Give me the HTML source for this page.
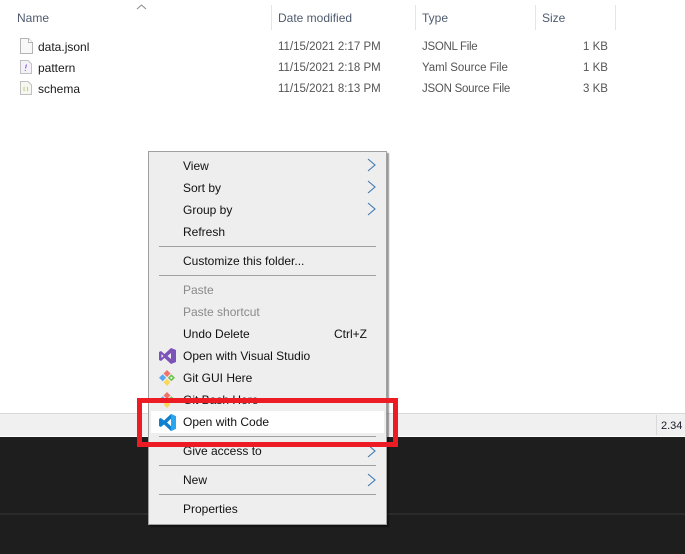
<!DOCTYPE html>
<html><head><meta charset="utf-8"><style>
html,body{margin:0;padding:0;background:#fff}
#p{position:relative;width:685px;height:554px;overflow:hidden;background:#fff;font-family:"Liberation Sans",sans-serif;font-size:12px}
#p div,#p svg{position:absolute}
.t{white-space:nowrap;line-height:16px;height:16px}
.h{color:#4f5b6e}.g{color:#555;font-size:11.5px}.f{color:#1a1a1a}.m{color:#111;left:183px}.d{color:#8a8a8a;left:183px}
.v{width:1px;height:25px;top:5px;background:#e5e5e5}
.s{left:159px;width:217px;height:1px;background:#a0a0a0}
</style></head><body><div id="p">
<svg style="left:136px;top:3px" width="11" height="7"><path d="M1 6L5.500 2L10 6" fill="none" stroke="#8a8a8a" stroke-width="1"/></svg>
<div class="t h" style="left:17px;top:10px">Name</div>
<div class="t h" style="left:278px;top:10px">Date modified</div>
<div class="t h" style="left:422px;top:10px">Type</div>
<div class="t h" style="left:542px;top:10px">Size</div>
<div class="v" style="left:271px"></div><div class="v" style="left:415px"></div><div class="v" style="left:535px"></div><div class="v" style="left:615px"></div>

<svg style="left:20px;top:38px" width="13" height="16"><path d="M.5 .5H8.500L12.500 4.500V15.500H.5Z" fill="#f8f8f8" stroke="#b4b4b4"/><path d="M8.500 .5V4.500H12.500" fill="#fff" stroke="#b4b4b4"/></svg>
<svg style="left:20px;top:60px" width="12" height="14"><path d="M.5 .5H8L11.500 4V13.500H.5Z" fill="#f4f2f8" stroke="#c0c0c0"/><path d="M6.500 4.500L5.500 8.500M5.300 10V11" stroke="#8a62c8" stroke-width="1.100"/></svg>
<svg style="left:20px;top:81px" width="12" height="14"><path d="M.5 .5H8L11.500 4V13.500H.5Z" fill="#f7f7f2" stroke="#c0c0c0"/><path d="M4.500 6L4 6.500V9.500L4.500 10M7 6L7.500 6.500V9.500L7 10" fill="none" stroke="#c2cc78"/></svg>

<div class="t f" style="left:38px;top:39px">data.jsonl</div>
<div class="t f" style="left:38px;top:60px">pattern</div>
<div class="t f" style="left:38px;top:81px">schema</div>
<div class="t g" style="left:278px;top:39px">11/15/2021 2:17 PM</div>
<div class="t g" style="left:278px;top:60px">11/15/2021 2:18 PM</div>
<div class="t g" style="left:278px;top:81px">11/15/2021 8:13 PM</div>
<div class="t g" style="left:422px;top:39px;letter-spacing:-.3px">JSONL File</div>
<div class="t g" style="left:422px;top:60px;letter-spacing:-.05px">Yaml Source File</div>
<div class="t g" style="left:422px;top:81px;letter-spacing:-.25px">JSON Source File</div>
<div class="t g" style="left:583px;top:39px">1 KB</div>
<div class="t g" style="left:583px;top:60px">1 KB</div>
<div class="t g" style="left:583px;top:81px">3 KB</div>

<div style="left:0;top:413px;width:685px;height:1px;background:#d9d9d9"></div>
<div style="left:0;top:414px;width:685px;height:22px;background:#f0f0f0"></div>
<div style="left:656px;top:415px;width:1px;height:20px;background:#d9d9d9"></div>
<div class="t" style="left:661px;top:418px;color:#1a1a2a;font-size:11px">2.34</div>
<div style="left:0;top:437px;width:685px;height:117px;background:#1e1e1e"></div>
<div style="left:0;top:513px;width:685px;height:2px;background:#2b2b2b"></div>

<div style="left:148px;top:151px;width:237px;height:372px;background:#eeeeee;border:1px solid #a0a0a0;box-shadow:2px 2px 1px rgba(0,0,0,.4)"></div>
<div style="left:151px;top:411px;width:233px;height:22px;background:#fff"></div>

<div class="t m" style="top:158px">View</div>
<div class="t m" style="top:180px">Sort by</div>
<div class="t m" style="top:202px">Group by</div>
<div class="t m" style="top:224px">Refresh</div>
<div class="s" style="top:246px"></div>
<div class="t m" style="top:253px">Customize this folder...</div>
<div class="s" style="top:275px"></div>
<div class="t d" style="top:282px">Paste</div>
<div class="t d" style="top:304px">Paste shortcut</div>
<div class="t m" style="top:326px">Undo Delete</div>
<div class="t m" style="left:334px;top:326px">Ctrl+Z</div>
<div class="t m" style="top:348px">Open with Visual Studio</div>
<div class="t m" style="top:370px">Git GUI Here</div>
<div class="t m" style="top:392px">Git Bash Here</div>
<div class="t m" style="top:414px">Open with Code</div>
<div class="s" style="top:436px"></div>
<div class="t m" style="top:443px">Give access to</div>
<div class="s" style="top:465px"></div>
<div class="t m" style="top:472px">New</div>
<div class="s" style="top:494px"></div>
<div class="t m" style="top:501px">Properties</div>

<svg style="left:367px;top:158px" width="10" height="14"><path d="M1 1L8 7L1 13" fill="none" stroke="#3f79b0" stroke-width="1.100"/></svg>
<svg style="left:367px;top:180px" width="10" height="14"><path d="M1 1L8 7L1 13" fill="none" stroke="#3f79b0" stroke-width="1.100"/></svg>
<svg style="left:367px;top:202px" width="10" height="14"><path d="M1 1L8 7L1 13" fill="none" stroke="#3f79b0" stroke-width="1.100"/></svg>
<svg style="left:367px;top:444px" width="10" height="14"><path d="M1 1L8 7L1 13" fill="none" stroke="#3f79b0" stroke-width="1.100"/></svg>
<svg style="left:367px;top:473px" width="10" height="14"><path d="M1 1L8 7L1 13" fill="none" stroke="#3f79b0" stroke-width="1.100"/></svg>

<svg style="left:159px;top:348px" width="17" height="16" viewBox="0 0 17 16"><path d="M12 0L17 2V14L12 16L5.500 10L2 13L0 12V4L2 3L5.500 6ZM12 5L8.500 8L12 11ZM2.500 6V10L4.500 8Z" fill="#7c53b8" fill-rule="evenodd"/></svg>

<svg style="left:159px;top:370px" width="16" height="16" viewBox="0 0 16 16"><path d="M8 0L11.500 3.500L8 7L4.500 3.500Z" fill="#f0736a"/><path d="M3.700 4.300L7.200 7.800L3.700 11.300L0 7.800Z" fill="#5aa7f0"/><path d="M12.300 4.300L16 7.800L12.300 11.300L8.800 7.800Z" fill="#6cc24a"/><path d="M12.300 6.500L13.600 7.800L12.300 9.100L11 7.800Z" fill="#fff"/><path d="M8 8.800L11.500 12.300L8 16L4.500 12.300Z" fill="#fbd75b"/></svg>
<svg style="left:159px;top:392px" width="16" height="16" viewBox="0 0 16 16"><path d="M8 0L11.500 3.500L8 7L4.500 3.500Z" fill="#f0736a"/><path d="M3.700 4.300L7.200 7.800L3.700 11.300L0 7.800Z" fill="#5aa7f0"/><path d="M12.300 4.300L16 7.800L12.300 11.300L8.800 7.800Z" fill="#6cc24a"/><path d="M8 8.800L11.500 12.300L8 16L4.500 12.300Z" fill="#fbd75b"/></svg>

<svg style="left:159px;top:414px" width="17" height="17" viewBox="0 0 17 17"><path d="M12 0L17 2.200V14.800L12 17L5 10.500L1.800 13L0 12V5L1.800 4L5 6.500ZM12 4.800L8 8.500L12 12.200Z" fill="#0f7fcf" fill-rule="evenodd"/><path d="M12 0L17 2.200V14.800L12 17Z" fill="#2aa5ee"/></svg>

<div style="left:137px;top:398px;width:251px;height:39px;border:5px solid #ed1c24"></div>
</div></body></html>
